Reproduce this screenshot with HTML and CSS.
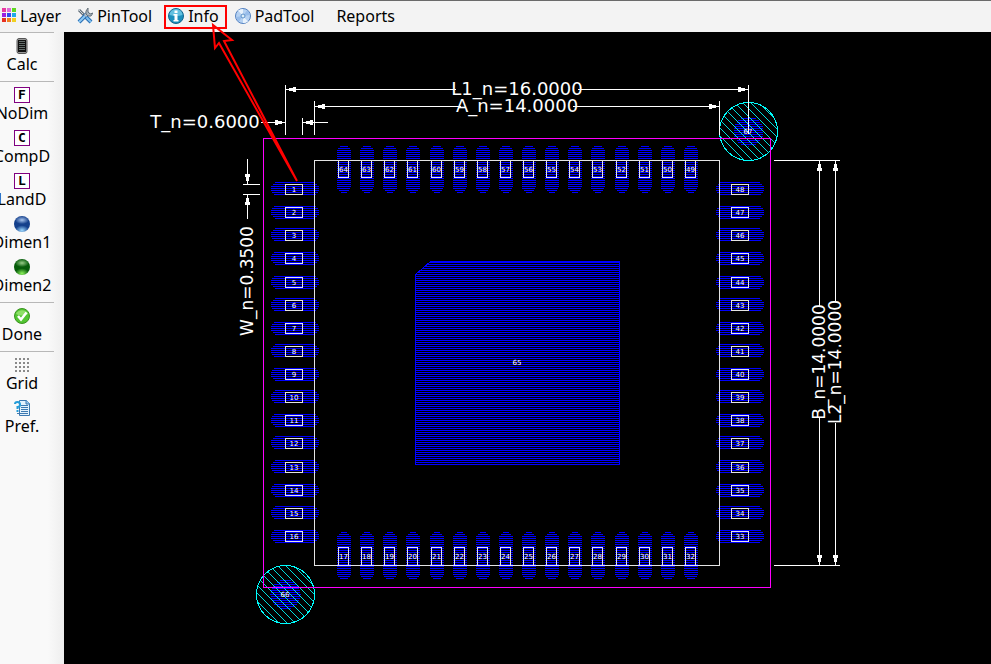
FILE: index.html
```
<!DOCTYPE html>
<html lang="en">
  <head>
    <meta charset="utf-8">
    <title>Footprint editor</title>
    <link rel="stylesheet" href="styles.css">
  </head>
  <body>
    <div class="app">
      <header class="toolbar">
        <button class="tool" type="button">
          <svg class="icon" viewBox="0 0 16 16">
            <rect x="2" y="0" width="4" height="4" fill="#e838a0"/><rect x="7" y="0" width="4" height="4" fill="#e06ad8"/><rect x="12" y="0" width="4" height="4" fill="#5ed820"/>
            <rect x="2" y="5" width="4" height="4" fill="#9a20e0"/><rect x="7" y="5" width="4" height="4" fill="#3048f0"/><rect x="12" y="5" width="4" height="4" fill="#20a8e8"/>
            <rect x="2" y="10" width="4" height="4" fill="#e83020"/><rect x="7" y="10" width="4" height="4" fill="#f08020"/><rect x="12" y="10" width="4" height="4" fill="#f0d020"/>
          </svg>
          <span>Layer</span>
        </button>
        <button class="tool" type="button">
          <svg class="icon" viewBox="0 0 16 16">
            <path d="M2 2l5 5" stroke="#66727c" stroke-width="3"/>
            <path d="M1 1l5 5" stroke="#c8d2da" stroke-width="1"/>
            <path d="M9 9l5 5" stroke="#2a6fb4" stroke-width="4"/>
            <path d="M9 9l5 5" stroke="#7fc0f0" stroke-width="2"/>
            <path d="M2 14l9-9" stroke="#2a6fb4" stroke-width="4"/>
            <path d="M2 14l6-6" stroke="#8cc8f4" stroke-width="2"/>
            <path d="M8 8l4-4" stroke="#b4bec6" stroke-width="3"/>
            <path d="M11 0L9 3v3l2 2h3l2-3-3 1-2-2z" fill="#a8b4bd" stroke="#66727c" stroke-width="1"/>
          </svg>
          <span>PinTool</span>
        </button>
        <button class="tool" type="button">
          <svg class="icon" viewBox="0 0 16 16">
            <circle cx="8" cy="8" r="7.5" fill="#1c8fbc" stroke="#14648c"/>
            <path d="M1.500 7a6.500 6 0 0 1 13 0q-6 2-13 0z" fill="#62c0e0"/>
            <path d="M6.500 2.500h3v2.500h-3zM5.500 6h4v6h1v1.500h-5V12h1V7.500h-1z" fill="#fff"/>
          </svg>
          <span>Info</span>
        </button>
        <button class="tool" type="button">
          <svg class="icon" viewBox="0 0 16 16">
            <circle cx="8" cy="8" r="7.500" fill="#b6d2f2" stroke="#5482c0"/>
            <path d="M8 8L3 2.500A7 7 0 0 1 8 1zM8 8l5 5.500A7 7 0 0 1 8 15z" fill="#e8f2fc"/>
            <path d="M8 8L1 9a7 7 0 0 0 3 4.500zM8 8l7-1a7 7 0 0 0-3-4.500z" fill="#98bdea"/>
            <circle cx="8" cy="8" r="2" fill="#dff0fa" stroke="#5c90c8"/>
          </svg>
          <span>PadTool</span>
        </button>
        <button class="tool tool-text" type="button">Reports</button>
      </header>

      <div class="work">
        <aside class="sidebar">
          <div class="group">
            <button class="side" type="button">
              <svg class="icon" viewBox="0 0 16 16">
                <rect x="3" y=".5" width="10" height="15" rx="2" fill="#999" stroke="#555"/>
                <rect x="4" y="2" width="8" height="12" fill="#111"/>
                <path d="M6 3v10M8 3v10M10 3v10" stroke="#b8ccc8" stroke-dasharray="1 1"/>
              </svg>
              <span>Calc</span>
            </button>
          </div>
          <div class="group">
            <button class="side" type="button"><b class="letter">F</b><span>NoDim</span></button>
            <button class="side" type="button"><b class="letter">C</b><span>CompD</span></button>
            <button class="side" type="button"><b class="letter">L</b><span>LandD</span></button>
            <button class="side" type="button"><i class="ball blue"></i><span>Dimen1</span></button>
            <button class="side" type="button"><i class="ball green"></i><span>Dimen2</span></button>
          </div>
          <div class="group">
            <button class="side" type="button">
              <svg class="icon" viewBox="0 0 16 16">
                <circle cx="8" cy="8" r="7.500" fill="#52c432" stroke="#3a9420"/>
                <path d="M2 6a6.500 6 0 0 1 12 0q-6 3-12 0z" fill="#8ee068"/>
                <path d="M4 8l3 3.500L12.500 4.500" fill="none" stroke="#fff" stroke-width="2.500"/>
              </svg>
              <span>Done</span>
            </button>
          </div>
          <div class="group">
            <button class="side" type="button">
              <svg class="icon" viewBox="0 0 16 16">
                <path d="M2 1v15M6 1v15M10 1v15M14 1v15" stroke="#8a8a8a" stroke-width="2" stroke-dasharray="2 2"/>
              </svg>
              <span>Grid</span>
            </button>
            <button class="side" type="button">
              <svg class="icon" viewBox="0 0 16 16">
                <path d="M5.500 .5h7l3 3v12h-10z" fill="#e4f2fc" stroke="#3c78b0"/>
                <path d="M12 0v4h4" fill="#9cc8ec" stroke="#3c78b0"/>
                <path d="M7 5.500h7M7 7.500h7M7 9.500h7M7 11.500h7M3 13.500h11" stroke="#3c78b0"/>
                <path d="M1 4q0-2 2.500-2T6 4.500 3.500 7v2" fill="none" stroke="#249cd8" stroke-width="2"/>
                <path d="M2.500 10h2v2h-2z" fill="#249cd8"/>
              </svg>
              <span>Pref.</span>
            </button>
          </div>
        </aside>

        <main class="board">
          <!-- drawing units are window pixels, so the origin sits above the toolbar -->
          <svg class="drawing" viewBox="64 32 927 632" preserveAspectRatio="xMinYMin meet">
            <defs>
              <pattern id="stripes" width="2" height="2" patternUnits="userSpaceOnUse">
                <rect width="2" height="1" fill="#00f"/>
              </pattern>
              <pattern id="hatch" width="8" height="8" patternUnits="userSpaceOnUse">
                <path d="M-1 -1L9 9M7 -1L9 1M-1 7L1 9" stroke="#0dd" stroke-width="1"/>
              </pattern>
              <marker id="arrow" viewBox="0 0 10 6" refX="10" refY="3" markerWidth="10" markerHeight="6" markerUnits="userSpaceOnUse" orient="auto">
                <path d="M0 0L10 3L0 6z" fill="#fff"/>
              </marker>
            </defs>

            <g id="pads"></g>
            <path class="pad" d="M430.500 261.500H619.500V464.500H415.500V274.500z"/>
            <text class="num" x="517" y="365">65</text>

            <circle class="core" cx="748.500" cy="131.500" r="15"/>
            <circle class="mark" cx="748.500" cy="131.500" r="29"/>
            <circle class="core" cx="285.500" cy="594.500" r="15"/>
            <circle class="mark" cx="285.500" cy="594.500" r="29"/>
            <text class="num" x="748" y="134">67</text>
            <text class="num" x="285" y="597">66</text>

            <rect class="body-line" x="314.500" y="160.500" width="405" height="405"/>
            <rect class="court" x="263.500" y="138.500" width="507" height="449"/>

            <g class="ext">
              <path d="M285.500 85V135M748.500 85V134M314.500 101V135M719.500 101V135M302.500 118V135"/>
              <path d="M243 184.500H260M243 194.500H260"/>
              <path d="M774 160.500H840M774 565.500H840"/>
            </g>
            <g class="dim">
              <path d="M456 89.500H286"/>
              <path d="M578 89.500H748"/>
              <path d="M461 106.500H315"/>
              <path d="M573 106.500H719"/>
              <path d="M261 122.500H285"/>
              <path d="M328 122.500H303"/>
              <path d="M247.500 159V184"/>
              <path d="M247.500 219V195"/>
              <path d="M819.500 306V161"/>
              <path d="M819.500 418V565"/>
              <path d="M835.500 301V161"/>
              <path d="M835.500 423V565"/>
            </g>
            <g class="value">
              <text x="517" y="95">L1_n=16.0000</text>
              <text x="517" y="112">A_n=14.0000</text>
              <text x="205" y="128">T_n=0.6000</text>
            </g>
            <g class="value upright">
              <text transform="translate(253 281) rotate(-90)">W_n=0.3500</text>
              <text transform="translate(825 362) rotate(-90)">B_n=14.0000</text>
              <text transform="translate(841 362) rotate(-90)">L2_n=14.0000</text>
            </g>
          </svg>
        </main>
      </div>

      <svg class="callout" width="320" height="200" viewBox="0 0 320 200">
        <rect x="165" y="6" width="61" height="22"/>
        <path d="M297 181L224 41L232 40L213 25L215 48L219 43z"/>
      </svg>
    </div>
    <script src="script.js"></script>
  </body>
</html>
```
FILE: styles.css
```
* {
  box-sizing: border-box;
}
body {
  margin: 0;
  font-family: "Noto Sans", sans-serif;
  font-size: 16px;
  color: #000;
  background: #f3f3f3;
}
button {
  border: 0;
  padding: 0;
  background: none;
  font: inherit;
  color: inherit;
}
.app {
  position: relative;
  display: flex;
  flex-direction: column;
  height: 100vh;
  overflow: hidden;
}

/* top bar */
.toolbar {
  display: flex;
  align-items: center;
  gap: 16px;
  height: 32px;
  flex: none;
  padding-bottom: 2px;
  border-top: 1px solid #6a6a6a;
  background: #f3f3f3;
}
.tool {
  display: flex;
  align-items: center;
  gap: 4px;
  line-height: 20px;
}
.tool-text {
  margin-left: 6px;
}
.icon {
  display: block;
  width: 16px;
  height: 16px;
  flex: none;
}

/* left bar */
.work {
  display: flex;
  flex: 1;
  min-height: 0;
}
.sidebar {
  width: 64px;
  flex: none;
  overflow: hidden;
  background: linear-gradient(to right, #f9f9f9 48px, #eee);
}
.group {
  display: flex;
  flex-direction: column;
  width: 54px;
  padding-bottom: 5px;
  border-top: 1px solid #b8b8b8;
}
.side {
  display: flex;
  flex-direction: column;
  align-items: center;
  width: 44px;
  height: 43px;
  padding-top: 5px;
  line-height: 20px;
}
.letter {
  width: 16px;
  height: 16px;
  border: 1px solid #800080;
  background: #fff;
  font: bold 13px/14px "DejaVu Sans Mono", monospace;
  text-align: center;
}
.ball {
  width: 16px;
  height: 16px;
  border-radius: 50%;
}
.blue {
  background:
    radial-gradient(ellipse 7px 5px at 50% 90%, #9cd8ff, transparent),
    radial-gradient(ellipse 7px 4px at 50% 25%, #a8c4ec, transparent),
    #14408c;
}
.green {
  background:
    radial-gradient(ellipse 7px 5px at 50% 90%, #8cf45c, transparent),
    radial-gradient(ellipse 7px 4px at 50% 25%, #98cc88, transparent),
    #065c0a;
}

/* board */
.board {
  flex: 1;
  min-width: 0;
  background: #000;
}
.drawing {
  display: block;
  width: 100%;
  height: 100%;
  fill: none;
  shape-rendering: crispEdges;
}
.pad {
  fill: url(#stripes);
  stroke: #00f;
}
.land,
.core {
  fill: url(#stripes);
}
.mark {
  fill: url(#hatch);
  stroke: #0ff;
}
.pin,
.body-line {
  stroke: #e4e4e4;
}
.court {
  stroke: #f0f;
}
.ext,
.dim {
  stroke: #fff;
}
.dim path {
  marker-end: url(#arrow);
}
.num {
  fill: #fff;
  font: 7px "DejaVu Sans", sans-serif;
  text-anchor: middle;
}
.value {
  fill: #fff;
  font: 18px "DejaVu Sans", sans-serif;
  text-anchor: middle;
}
.upright {
  font-size: 17px;
}

.callout {
  position: absolute;
  top: 0;
  left: 0;
  fill: none;
  stroke: #f00;
  stroke-width: 2;
  pointer-events: none;
}
```
FILE: script.js
```
var pads = document.getElementById("pads");
var pitch = 347 / 15;

function add(name, attrs, text) {
  var el = document.createElementNS("http://www.w3.org/2000/svg", name);
  for (var key in attrs) {
    el.setAttribute(key, attrs[key]);
  }
  if (text) {
    el.textContent = text;
  }
  pads.appendChild(el);
}

function land(x, y, w, h) {
  add("rect", { "class": "land", x: x, y: y, width: w, height: h, rx: 7 });
}

function pin(x, y, w, h, number) {
  add("rect", { "class": "pin", x: x + 0.5, y: y + 0.5, width: w, height: h });
  add("text", { "class": "num", x: x + w / 2 + 0.5, y: y + h / 2 + 3 }, String(number));
}

for (var i = 0; i < 16; i++) {
  var step = Math.round(i * pitch);

  // left and right columns
  land(271, 182 + step, 48, 14);
  pin(285, 184 + step, 17, 10, 1 + i);
  land(716, 182 + step, 48, 14);
  pin(731, 184 + step, 17, 10, 48 - i);

  // top and bottom rows
  land(337 + step, 145, 14, 48);
  pin(338 + step, 160, 10, 17, 64 - i);
  land(337 + step, 532, 14, 48);
  pin(338 + step, 547, 10, 18, 17 + i);
}
```
